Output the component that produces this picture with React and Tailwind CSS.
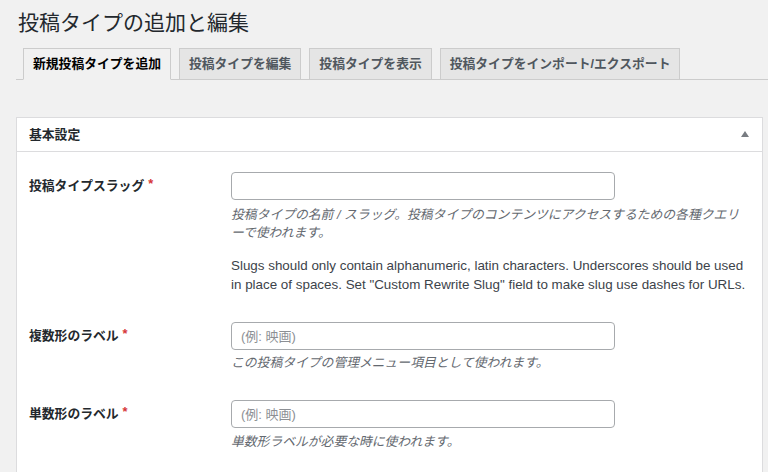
import React from "react";

const font = "font-['Liberation_Sans','Noto_Sans_CJK_JP',sans-serif]";

const tabs = [
    { label: "新規投稿タイプを追加", active: true },
    { label: "投稿タイプを編集" },
    { label: "投稿タイプを表示" },
    { label: "投稿タイプをインポート/エクスポート" },
];

function Required() {
    return <span className="ml-[4px] text-[#d63638] relative top-[-2px]">*</span>;
}

function FieldRow({ label, placeholder, children, className = "" }) {
    return (
        <div className={"flex items-start " + className}>
            <div className="w-[202px] h-[28px] flex items-center text-[12.8px] font-bold text-[#23282d] shrink-0">
                {label}
                <Required />
            </div>
            <div className="w-[516px]">
                <input
                    type="text"
                    placeholder={placeholder}
                    className="block w-[384px] h-[28px] rounded-[4px] border border-[#a7aaad] bg-white px-[9px] text-[13px] text-[#2c3338] placeholder:text-[#8c8f94] outline-none"
                />
                {children}
            </div>
        </div>
    );
}

export default function App() {
    return (
        <div className={"min-h-[472px] bg-[#f1f1f1] pl-[16px] pt-[8px] overflow-hidden " + font}>
            <h1 className="pl-[2px] text-[21px] leading-[29px] font-normal text-[#23282d]">投稿タイプの追加と編集</h1>

            {/* tab strip */}
            <div className="mt-[11px] flex items-end border-b border-[#ccc] pl-[7px]">
                {tabs.map((t, i) => (
                    <div
                        key={t.label}
                        className={
                            "h-[32px] px-[9px] flex items-center border border-[#ccc] text-[12.8px] font-bold whitespace-nowrap -mb-px " +
                            (i > 0 ? "ml-[8px] " : "") +
                            (t.active
                                ? "bg-[#f1f1f1] border-b-[#f1f1f1] text-[#000]"
                                : "bg-[#e5e5e5] text-[#50575e]")
                        }
                    >
                        {t.label}
                    </div>
                ))}
            </div>

            {/* settings box */}
            <div className="mt-[37px] w-[747px] bg-white border border-[#dcdcde]">
                <div className="h-[34px] flex items-center justify-between pl-[12px] pr-[13px] border-b border-[#dcdcde]">
                    <span className="text-[12.8px] font-bold text-[#23282d]">基本設定</span>
                    <svg width="8" height="6" viewBox="0 0 8 6" className="mt-[-2px]">
                        <polygon points="4,0 8,6 0,6" fill="#787c82" />
                    </svg>
                </div>

                <div className="pl-[12px] pt-[20px] pb-[40px]">
                    <FieldRow label="投稿タイプスラッグ">
                        <div className="mt-[6px] text-[12.8px] leading-[18px] italic text-[#646970]">
                            <span className="block whitespace-nowrap">投稿タイプの名前 / スラッグ。投稿タイプのコンテンツにアクセスするための各種クエリ</span>
                            <span className="block">ーで使われます。</span>
                        </div>
                        <p className="mt-[14px] text-[13.4px] leading-[19px] text-[#3c434a]">
                            Slugs should only contain alphanumeric, latin characters. Underscores should be used in place of spaces. Set "Custom Rewrite Slug" field to make slug use dashes for URLs.
                        </p>
                    </FieldRow>

                    <FieldRow label="複数形のラベル" placeholder="(例: 映画)" className="mt-[28px]">
                        <p className="mt-[4px] text-[12.8px] leading-[18px] italic text-[#646970]">
                            この投稿タイプの管理メニュー項目として使われます。
                        </p>
                    </FieldRow>

                    <FieldRow label="単数形のラベル" placeholder="(例: 映画)" className="mt-[28px]">
                        <p className="mt-[5px] text-[12.8px] leading-[18px] italic text-[#646970]">
                            単数形ラベルが必要な時に使われます。
                        </p>
                    </FieldRow>
                </div>
            </div>
        </div>
    );
}
